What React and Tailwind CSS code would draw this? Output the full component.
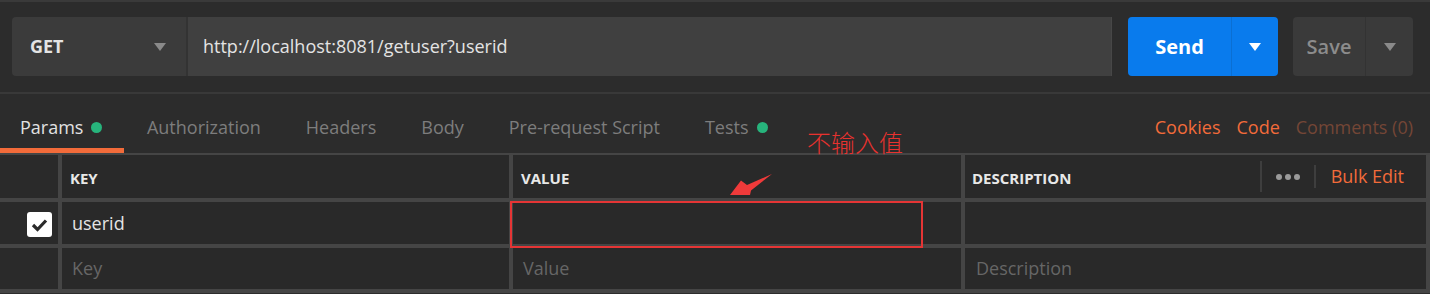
const font = { fontFamily: '"Open Sans", "Liberation Sans", sans-serif' };

const tabs = [
	{ label: "Params", dot: true, active: true },
	{ label: "Authorization" },
	{ label: "Headers" },
	{ label: "Body" },
	{ label: "Pre-request Script" },
	{ label: "Tests", dot: true },
];

const Caret = ({ color }) => (
	<svg width="12" height="8" viewBox="0 0 12 8">
		<path d="M0 0 L12 0 L6 8 Z" fill={color} />
	</svg>
);

const Tab = ({ label, dot, active, first }) => (
	<div
		className={`flex items-center h-[59px] pt-[12px] border-b-[5px] ${
			first ? "pl-[20px] pr-[22px]" : "px-[22.5px]"
		} ${active ? "border-[#f26b3a] text-[#e2e2e2]" : "border-transparent text-[#7d7d7d]"}`}
	>
		<span className="leading-[24px]">{label}</span>
		{dot && <span className="ml-[8px] w-[11px] h-[11px] rounded-full bg-[#27b47c]" />}
	</div>
);

const App = () => {
	return (
		<div
			className="relative w-[1430px] h-[294px] bg-[#2c2c2c] border-t-2 border-[#3a3a3a] overflow-hidden text-[18px]"
			style={font}
		>
			{/* request bar */}
			<div className="flex items-stretch h-[59px] mt-[15px] ml-[12px] mr-[17px]">
				<div className="flex items-center justify-between w-[176px] pl-[18px] pr-[20px] bg-[#3b3b3b] rounded-l-[4px] border-r-2 border-[#333333]">
					<span className="font-bold text-[#e4e4e4] text-[18px]">GET</span>
					<Caret color="#8a8a8a" />
				</div>
				<div className="flex items-center w-[924px] pl-[15px] bg-[#404040] text-[#e4e4e4] border-r border-[#474747]">
					http://localhost:8081/getuser?userid
				</div>
				<div className="flex ml-[16px] w-[150px] rounded-[4px] bg-[#097bed] overflow-hidden">
					<div className="flex items-center justify-center w-[104px] text-white font-bold text-[20px] border-r border-[#0a6fd3]">
						Send
					</div>
					<div className="flex flex-1 items-center justify-center">
						<Caret color="#ffffff" />
					</div>
				</div>
				<div className="flex ml-[15px] w-[120px] rounded-[4px] bg-[#3a3a3a] overflow-hidden">
					<div className="flex items-center justify-center w-[73px] text-[#8c8c8c] font-semibold text-[20px] border-r border-[#333333]">
						Save
					</div>
					<div className="flex flex-1 items-center justify-center">
						<Caret color="#8a8a8a" />
					</div>
				</div>
			</div>

			<div className="mt-[16px] border-t-2 border-[#393939]" />

			{/* tabs */}
			<div className="flex items-stretch justify-between">
				<div className="flex">
					{tabs.map((t, i) => (
						<Tab key={t.label} {...t} first={i === 0} />
					))}
				</div>
				<div className="flex items-center gap-[16px] pt-[7px] pr-[17px]">
					<span className="text-[#f26b3a]">Cookies</span>
					<span className="text-[#f26b3a]">Code</span>
					<span className="text-[#744636]">Comments (0)</span>
				</div>
			</div>

			{/* params table */}
			<div className="grid grid-cols-[58px_447px_448px_461px] grid-rows-[43px_42px_41px] gap-[4px] bg-[#454545] pt-[2px] pr-[4px] pb-[4px]">
				<div className="bg-[#2a2a2a]" />
				<div className="flex items-center pl-[8px] pt-[3px] bg-[#292929] text-[15px] font-bold text-[#e8e8e8]">KEY</div>
				<div className="flex items-center pl-[8px] pt-[3px] bg-[#292929] text-[15px] font-bold text-[#e8e8e8]">VALUE</div>
				<div className="flex items-center pl-[7px] pr-[22px] bg-[#292929]">
					<span className="flex-1 pt-[3px] text-[15px] font-bold text-[#e8e8e8]">DESCRIPTION</span>
					<span className="w-[2px] h-[31px] bg-[#3e3e3e]" />
					<span className="flex gap-[3px] mx-[14px]">
						<span className="w-[6px] h-[6px] rounded-full bg-[#9a9a9a]" />
						<span className="w-[6px] h-[6px] rounded-full bg-[#9a9a9a]" />
						<span className="w-[6px] h-[6px] rounded-full bg-[#9a9a9a]" />
					</span>
					<span className="w-[2px] h-[23px] bg-[#3e3e3e]" />
					<span className="ml-[15px] text-[#f26b3a]">Bulk Edit</span>
				</div>

				<div className="flex items-center justify-end pr-[6px] pt-[2px] bg-[#2a2a2a]">
					<span className="flex items-center justify-center w-[25px] h-[25px] rounded-[3px] bg-white">
						<svg width="25" height="25" viewBox="0 0 25 25">
							<path d="M6 13 L10.5 17.5 L19 8.5" fill="none" stroke="#2a2a2a" strokeWidth="3.2" />
						</svg>
					</span>
				</div>
				<div className="flex items-center pl-[10px] bg-[#292929] text-[#e4e4e4]">userid</div>
				<div className="bg-[#292929]" />
				<div className="bg-[#292929]" />

				<div className="bg-[#2a2a2a]" />
				<div className="flex items-center pl-[10px] bg-[#292929] text-[#666666]">Key</div>
				<div className="flex items-center pl-[10px] bg-[#292929] text-[#666666]">Value</div>
				<div className="flex items-center pl-[11px] bg-[#292929] text-[#666666]">Description</div>
			</div>

			{/* red annotation drawn over the screenshot */}
			<div className="absolute left-[510px] top-[199px] w-[413px] h-[47px] border-2 border-[#e53535]" />
			<div
				className="absolute left-[807px] top-[124px] text-[24px] leading-[32px] text-[#e8322f]"
				style={{ fontFamily: '"Noto Sans CJK SC", sans-serif', fontWeight: 300 }}
			>
				不输入值
			</div>
			<svg className="absolute left-[725px] top-[168px]" width="52" height="30" viewBox="725 168 52 30">
				<path d="M730 193 L741 178.5 L747 183 L772 172 L751 188.5 L750 193 Z" fill="#f03a3a" />
			</svg>
		</div>
	);
};

export default App;
